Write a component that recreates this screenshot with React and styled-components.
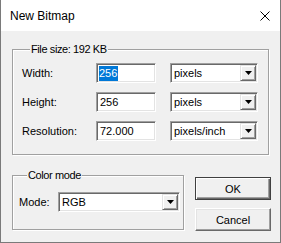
import React from 'react';
import styled, { createGlobalStyle, css } from 'styled-components';

const GlobalStyle = createGlobalStyle`
    html, body {
        margin: 0;
        padding: 0;
        background: #ffffff;
    }
    * {
        box-sizing: border-box;
    }
`;

const Window = styled.div`
    width: 281px;
    height: 243px;
    display: flex;
    flex-direction: column;
    border: 1px solid #7a7a7a;
    border-top: none;
    font-family: "Liberation Sans", Arial, sans-serif;
    font-size: 11px;
    color: #000;
`;

const TitleBar = styled.div`
    height: 31px;
    flex: none;
    background: #fff;
    display: flex;
    align-items: center;
    justify-content: space-between;
    padding: 0 10px 0 9px;
    font-size: 12px;
`;

const Body = styled.div`
    flex: 1;
    background: #f0f0f0;
    padding: 18px 11px 0 11px;
`;

const Group = styled.div`
    width: ${p => p.$width || 'auto'};
    height: ${p => p.$height};
    border: 1px solid #a0a0a0;
    box-shadow: inset 1px 1px 0 #fff, 1px 1px 0 #fff;
    padding: 0 ${p => p.$padRight || 0}px 0 ${p => p.$padLeft || 0}px;
`;

const Legend = styled.div`
    width: fit-content;
    margin: -7px 0 0 ${p => p.$offset}px;
    padding: 0 1px;
    line-height: 13px;
    background: #f0f0f0;
    font-size: 11px;
    letter-spacing: -0.4px;
`;

const Rows = styled.div`
    display: grid;
    grid-template-columns: ${p => p.$columns};
    row-gap: 9px;
    align-items: center;
    margin-top: ${p => p.$top}px;
`;

const Label = styled.span`
    line-height: 20px;
`;

const Field = styled.div`
    width: ${p => p.$width || 'auto'};
    height: 20px;
    background: #fff;
    border-style: solid;
    border-width: 1px;
    border-color: #a0a0a0 #fff #fff #a0a0a0;
    box-shadow: inset 1px 1px 0 #696969, inset -1px -1px 0 #e3e3e3;
    display: flex;
    align-items: center;
    padding: 0 2px;
`;

const Selected = styled.span`
    background: #0078d7;
    color: #fff;
    line-height: 15px;
    padding: 0 1px 0 0;
`;

const Value = styled.span`
    padding-left: 1px;
`;

const Select = styled(Field)`
    justify-content: space-between;
    padding: 0 1px 0 2px;
`;

const ArrowButton = styled.div`
    width: 16px;
    height: 16px;
    background: #f0f0f0;
    border-style: solid;
    border-width: 1px;
    border-color: #e3e3e3 #696969 #696969 #e3e3e3;
    box-shadow: inset 1px 1px 0 #fff, inset -1px -1px 0 #a0a0a0;
    display: flex;
    align-items: center;
    justify-content: center;
`;

const Bottom = styled.div`
    display: flex;
    align-items: flex-start;
    margin-top: 20px;
`;

const Buttons = styled.div`
    display: flex;
    flex-direction: column;
    gap: 8px;
    margin: 2px 0 0 11px;
`;

const PushButton = styled.button`
    width: 76px;
    height: 23px;
    padding: 0;
    font-family: "Liberation Sans", Arial, sans-serif;
    font-size: 11px;
    color: #000;
    background: #f0f0f0;
    border: 1px solid;
    border-color: #fff #696969 #696969 #fff;
    box-shadow: inset -1px -1px 0 #a0a0a0, inset 1px 1px 0 #e3e3e3;
    ${p => p.$default && css`
        border-color: #404040;
        box-shadow: inset 1px 1px 0 #fff, inset -1px -1px 0 #696969, inset -2px -2px 0 #a0a0a0;
    `}
`;

const CloseIcon = () => (
    <svg width="10" height="10" viewBox="0 0 10 10">
        <path d="M0.5 0.5 L9.5 9.5 M9.5 0.5 L0.5 9.5" stroke="#000" strokeWidth="1" fill="none" />
    </svg>
);

const Arrow = () => (
    <svg width="7" height="4" viewBox="0 0 7 4">
        <path d="M0 0 H7 L3.5 4 Z" fill="#000" />
    </svg>
);

function Dropdown({ value }) {
    return (
        <Select>
            <Value>{value}</Value>
            <ArrowButton><Arrow /></ArrowButton>
        </Select>
    );
}

export default function App() {
    return (
        <Window>
            <GlobalStyle />
            <TitleBar>
                <span>New Bitmap</span>
                <CloseIcon />
            </TitleBar>
            <Body>
                <Group $height="106px" $padLeft={9} $padRight={9}>
                    <Legend $offset={8}>File size: 192 KB</Legend>
                    <Rows $columns="74px 74px 88px" $top={7}>
                        <Label>Width:</Label>
                        <Field $width="60px"><Selected>256</Selected></Field>
                        <Dropdown value="pixels" />
                        <Label>Height:</Label>
                        <Field $width="60px"><Value>256</Value></Field>
                        <Dropdown value="pixels" />
                        <Label>Resolution:</Label>
                        <Field $width="60px"><Value>72.000</Value></Field>
                        <Dropdown value="pixels/inch" />
                    </Rows>
                </Group>
                <Bottom>
                    <Group $width="172px" $height="55px" $padLeft={6} $padRight={3}>
                        <Legend $offset={8}>Color mode</Legend>
                        <Rows $columns="39px 122px" $top={10}>
                            <Label>Mode:</Label>
                            <Dropdown value="RGB" />
                        </Rows>
                    </Group>
                    <Buttons>
                        <PushButton $default>OK</PushButton>
                        <PushButton>Cancel</PushButton>
                    </Buttons>
                </Bottom>
            </Body>
        </Window>
    );
}
